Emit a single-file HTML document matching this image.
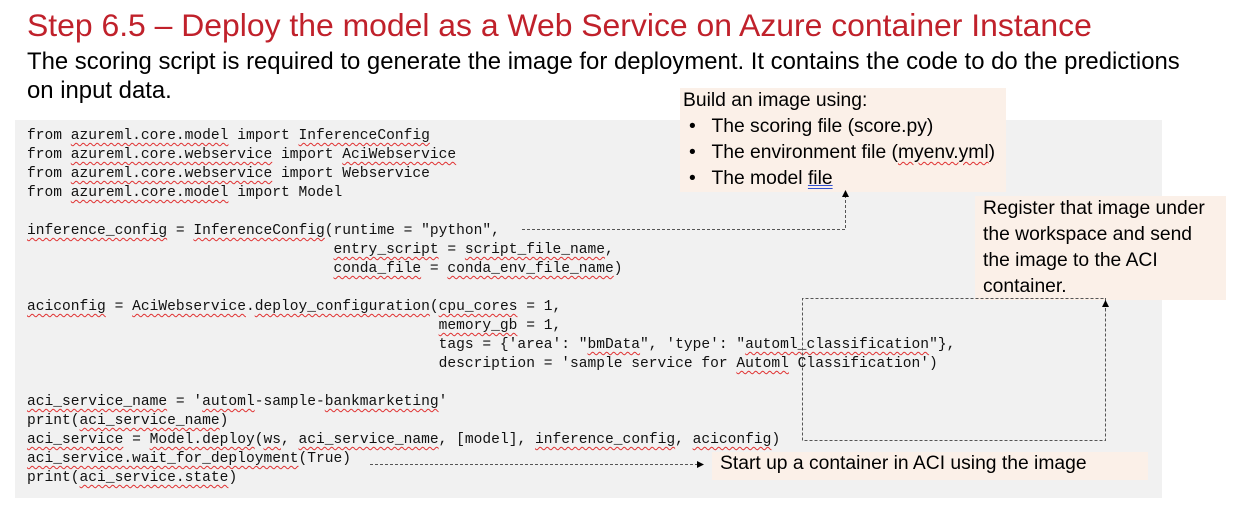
<!DOCTYPE html>
<html><head><meta charset="utf-8"><style>
body{margin:0;width:1233px;height:506px;background:#fff;position:relative;overflow:hidden;font-family:"Liberation Sans",sans-serif}
.t{position:absolute;left:27px;top:7px;font-size:31.9px;color:#c0212b;white-space:nowrap}
.s{position:absolute;left:27px;top:47px;font-size:23.9px;line-height:29px;color:#000;white-space:nowrap}
.code{position:absolute;left:15px;top:120px;width:1147px;height:378px;background:#f1f1f1}
pre{position:absolute;left:27px;top:127px;margin:0;font-family:"Liberation Mono",monospace;font-size:14.6px;line-height:19px;color:#111}
.w{text-decoration:underline wavy #e03030;text-decoration-thickness:1px;text-underline-offset:3px}
.box{position:absolute;background:#fbf0e8;font-family:"Liberation Sans",sans-serif;font-size:19.3px;color:#000;line-height:26px;white-space:nowrap}
</style></head><body>
<div class="t">Step 6.5 – Deploy the model as a Web Service on Azure container Instance</div>
<div class="s">The scoring script is required to generate the image for deployment. It contains the code to do the predictions<br>on input data.</div>
<div class="code"></div>
<pre>from <span class="w">azureml.core.model</span> import <span class="w">InferenceConfig</span>
from <span class="w">azureml.core.webservice</span> import <span class="w">AciWebservice</span>
from <span class="w">azureml.core.webservice</span> import Webservice
from <span class="w">azureml.core.model</span> import Model

<span class="w">inference_config</span> = <span class="w">InferenceConfig</span>(runtime = "python",
                                   <span class="w">entry_script</span> = <span class="w">script_file_name</span>,
                                   <span class="w">conda_file</span> = <span class="w">conda_env_file_name</span>)

<span class="w">aciconfig</span> = <span class="w">AciWebservice</span>.<span class="w">deploy_configuration</span>(<span class="w">cpu_cores</span> = 1,
                                               <span class="w">memory_gb</span> = 1,
                                               tags = {'area': "<span class="w">bmData</span>", 'type': "<span class="w">automl_classification</span>"},
                                               description = 'sample service for <span class="w">Automl</span> Classification')

<span class="w">aci_service_name</span> = '<span class="w">automl</span>-sample-<span class="w">bankmarketing</span>'
print(<span class="w">aci_service_name</span>)
<span class="w">aci_service</span> = <span class="w">Model.deploy</span>(<span class="w">ws</span>, <span class="w">aci_service_name</span>, [model], <span class="w">inference_config</span>, <span class="w">aciconfig</span>)
<span class="w">aci_service.wait_for_deployment</span>(True)
print(<span class="w">aci_service.state</span>)</pre>
<div class="box" style="left:680px;top:88px;width:326px;height:104px;padding:0 0 0 3px;box-sizing:border-box">Build an image using:<br>
<div style="padding-left:6px">•&nbsp;&nbsp; The scoring file (score.py)<br>•&nbsp;&nbsp; The environment file (<span class="w">myenv.yml</span>)<br>•&nbsp;&nbsp; The model <span style="text-decoration:underline double #3050d0">file</span></div></div>
<div class="box" style="left:975px;top:196px;width:251px;height:104px;padding:0 0 0 8px;box-sizing:border-box;overflow:hidden">Register that image under<br>the workspace and send<br>the image to the ACI<br>container.</div>
<div class="box" style="left:712px;top:452px;width:436px;height:28px;padding-left:8px;box-sizing:border-box;line-height:24px">Start up a container in ACI using the image</div>
<svg style="position:absolute;left:0;top:0" width="1233" height="506">
<g fill="none" stroke="#555" stroke-width="1" stroke-dasharray="3,2">
<path d="M522 229.5H845.5V197"/>
<path d="M802.5 440.5V298.5H1105.5V440.5H802.5"/>
<path d="M1105.5 298V312"/>
<path d="M370 464.5H698"/>
</g>
<path d="M845.5 190l-3.5 7h7z" fill="#000"/>
<path d="M1105.5 300l-3.5 7h7z" fill="#000"/>
<path d="M704 464.5l-7-3.5v7z" fill="#000"/>
</svg>
</body></html>
